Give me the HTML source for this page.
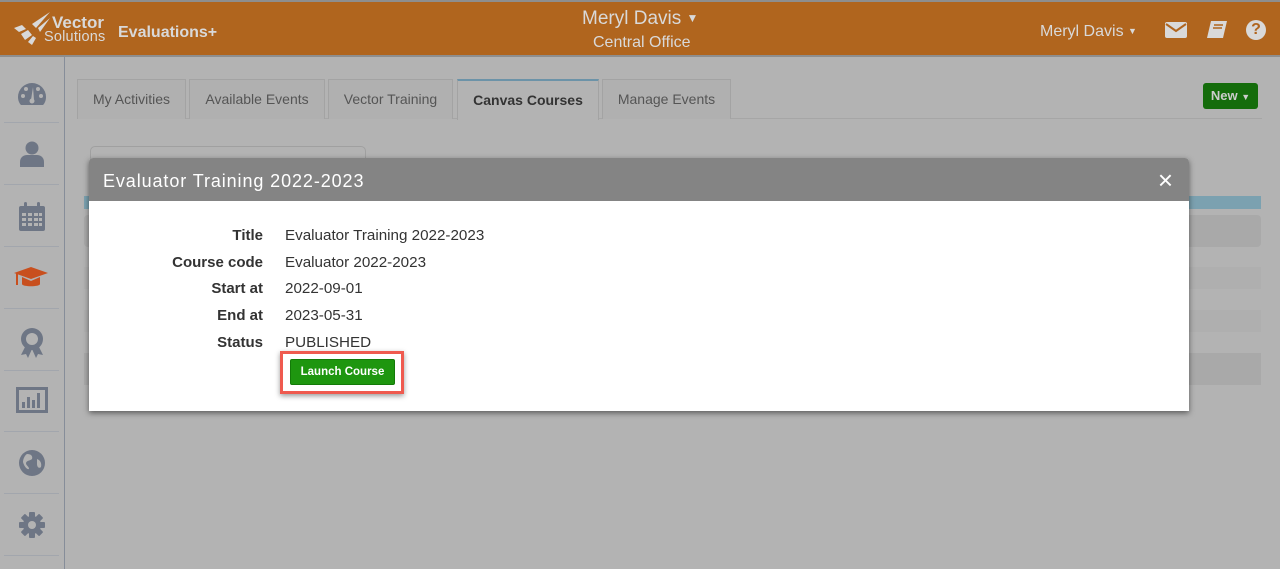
<!DOCTYPE html>
<html><head><meta charset="utf-8"><style>
*{box-sizing:border-box;margin:0;padding:0}
body{width:1280px;height:569px;overflow:hidden;background:#b3b3b3;font-family:"Liberation Sans",sans-serif;position:relative}
.hdr{position:absolute;left:0;top:0;width:1280px;height:57px;background:#b0651e;border-top:2px solid #8e8e8e;border-bottom:2px solid #8e8e8e}
.t{position:absolute;white-space:nowrap}
.side{position:absolute;left:0;top:57px;width:65px;height:512px;border-right:1px solid #868d99}
.sep{position:absolute;left:4px;width:55px;height:1px;background:#a2a6ad}
.tab{position:absolute;top:79px;height:40px;border:1px solid #a3a3a3;border-bottom:none;background:#b0b0b0;color:#555;font-size:14px;text-align:center;line-height:38px}
.modal{position:absolute;left:89px;top:158px;width:1100px;height:253px;background:#fff;box-shadow:0 2px 6px rgba(0,0,0,.5);border-radius:4px 4px 0 0}
.mh{height:43px;background:#848484;color:#fff;font-size:18px;letter-spacing:.9px;padding:13px 14px;border-radius:4px 4px 0 0}
.lb{position:absolute;left:0;width:174px;text-align:right;font-weight:bold;font-size:15px;color:#333}
.vl{position:absolute;left:196px;font-size:15.2px;color:#333}
</style></head><body>
<div class="hdr">
<svg class="t" style="left:12px;top:10px" width="40" height="36" viewBox="0 0 40 36"><g fill="#d9d9d9"><path d="M2 16l8-3 4 4-7 3z"/><path d="M9 22l7-4 4 5-7 5z"/><path d="M16 30l5-6 3 2-4 7z"/><path d="M20 12L38 0 24 16z"/><path d="M26 16L38 6 28 20z"/></g></svg>
<div class="t" style="left:52px;top:12px;color:#d9d9d9;font-size:17px;font-weight:bold;line-height:17px">Vector</div>
<div class="t" style="left:44px;top:28px;color:#d9d9d9;font-size:14.5px;line-height:14px;font-weight:300;letter-spacing:.2px">Solutions</div>
<div class="t" style="left:118px;top:22px;color:#d9d9d9;font-size:16px;font-weight:bold">Evaluations+</div>
<div class="t" style="left:582px;top:6px;color:#d9d9d9;font-size:19px">Meryl Davis <span style="font-size:12px;vertical-align:2px">▼</span></div>
<div class="t" style="left:593px;top:32px;color:#d9d9d9;font-size:16px">Central Office</div>
<div class="t" style="left:1040px;top:21px;color:#d9d9d9;font-size:16px">Meryl Davis <span style="font-size:9px;vertical-align:2px">▼</span></div>
<svg class="t" style="left:1165px;top:20px" width="22" height="16" viewBox="0 0 22 16"><rect width="22" height="16" rx="2" fill="#d9d9d9"/><path d="M1 2l10 7 10-7" stroke="#b0651e" stroke-width="2" fill="none"/></svg>
<svg class="t" style="left:1206px;top:18px" width="22" height="20" viewBox="0 0 22 20"><path d="M5 1h16l-4 17H1z" fill="#d9d9d9"/><path d="M8 5h9M7 8h9" stroke="#b0651e" stroke-width="1.5"/></svg>
<div class="t" style="left:1246px;top:18px;width:20px;height:20px;border-radius:50%;background:#d9d9d9;color:#b0651e;font-weight:bold;font-size:16px;text-align:center;line-height:20px">?</div>
</div>
<div class="side">
<svg class="t" style="left:17px;top:25px" width="30" height="24" viewBox="0 0 30 24"><path d="M15 1A14 14 0 0 0 1 15c0 3 1 6 3 8h22c2-2 3-5 3-8A14 14 0 0 0 15 1z" fill="#6e7685"/><g fill="#b3b3b3"><circle cx="6" cy="14" r="2"/><circle cx="9" cy="7" r="2"/><circle cx="21" cy="7" r="2"/><circle cx="24" cy="14" r="2"/><circle cx="15" cy="19" r="2.5"/><path d="M14 18l2-13 1 13z"/></g></svg>
<div class="sep" style="top:65px"></div>
<svg class="t" style="left:20px;top:84px" width="24" height="26" viewBox="0 0 24 26"><circle cx="12" cy="7" r="6.5" fill="#6e7685"/><path d="M0 26v-5c0-5 4-7 7-7h10c3 0 7 2 7 7v5z" fill="#6e7685"/></svg>
<div class="sep" style="top:127px"></div>
<svg class="t" style="left:18px;top:145px" width="28" height="30" viewBox="0 0 28 30"><rect x="1" y="4" width="26" height="25" rx="2" fill="#6e7685"/><g fill="#b3b3b3"><rect x="4" y="11" width="4" height="3"/><rect x="10" y="11" width="4" height="3"/><rect x="16" y="11" width="4" height="3"/><rect x="21" y="11" width="3" height="3"/><rect x="4" y="16" width="4" height="3"/><rect x="10" y="16" width="4" height="3"/><rect x="16" y="16" width="4" height="3"/><rect x="21" y="16" width="3" height="3"/><rect x="4" y="21" width="4" height="3"/><rect x="10" y="21" width="4" height="3"/><rect x="16" y="21" width="4" height="3"/><rect x="21" y="21" width="3" height="3"/></g><rect x="6" y="0" width="3" height="7" rx="1.5" fill="#6e7685"/><rect x="19" y="0" width="3" height="7" rx="1.5" fill="#6e7685"/></svg>
<div class="sep" style="top:189px"></div>
<svg class="t" style="left:14px;top:210px" width="35" height="24" viewBox="0 0 35 24"><path d="M17 0L34 6 17 12 0 6z" fill="#c84f1e"/><path d="M8 10v7c0 3 18 3 18 0v-7l-9 4z" fill="#c84f1e"/><rect x="2" y="6" width="2" height="12" fill="#c84f1e"/></svg>
<div class="sep" style="top:251px"></div>
<svg class="t" style="left:20px;top:271px" width="24" height="30" viewBox="0 0 24 30"><circle cx="12" cy="11" r="11" fill="#6e7685"/><circle cx="12" cy="11" r="6" fill="#b3b3b3"/><path d="M5 19l-4 8 5-1 2 4 4-9zM19 19l4 8-5-1-2 4-4-9z" fill="#6e7685"/></svg>
<div class="sep" style="top:313px"></div>
<svg class="t" style="left:16px;top:330px" width="32" height="26" viewBox="0 0 32 26"><rect x="1.5" y="1.5" width="29" height="23" fill="none" stroke="#6e7685" stroke-width="3"/><g fill="#6e7685"><rect x="6" y="15" width="3" height="6"/><rect x="11" y="10" width="3" height="11"/><rect x="16" y="13" width="3" height="8"/><rect x="21" y="6" width="3" height="15"/></g></svg>
<div class="sep" style="top:374px"></div>
<svg class="t" style="left:19px;top:393px" width="26" height="26" viewBox="0 0 26 26"><circle cx="13" cy="13" r="13" fill="#6e7685"/><path d="M8 4c4 0 6 2 5 5-2 2-5 1-6 4 0 3 3 3 3 6-2 1-5-3-6-7 0-3 2-7 4-8zM18 9c3 1 5 4 4 8-2 2-4 0-4-3z" fill="#b3b3b3"/></svg>
<div class="sep" style="top:436px"></div>
<svg class="t" style="left:19px;top:455px" width="26" height="26" viewBox="0 0 26 26"><g fill="#6e7685"><circle cx="13" cy="13" r="9"/><rect x="10" y="0" width="6" height="26" rx="1"/><rect x="0" y="10" width="26" height="6" rx="1"/><rect x="10" y="0" width="6" height="26" rx="1" transform="rotate(45 13 13)"/><rect x="10" y="0" width="6" height="26" rx="1" transform="rotate(-45 13 13)"/></g><circle cx="13" cy="13" r="4" fill="#b3b3b3"/></svg>
<div class="sep" style="top:498px"></div>
</div>
<div class="t" style="left:77px;top:118px;width:1185px;height:1px;background:#a6a6a6"></div>
<div class="tab" style="left:77px;width:109px">My Activities</div>
<div class="tab" style="left:189px;width:136px">Available Events</div>
<div class="tab" style="left:328px;width:125px">Vector Training</div>
<div class="tab" style="left:457px;width:142px;top:79px;height:41px;background:#b3b3b3;border-top:2px solid #6c93a8;color:#333;font-weight:bold">Canvas Courses</div>
<div class="tab" style="left:602px;width:129px">Manage Events</div>
<div class="t" style="left:1203px;top:83px;width:55px;height:26px;background:#146c0b;border-radius:3px;color:#ccc;font-weight:bold;font-size:13px;line-height:26px;text-align:center">New <span style="font-size:9px">▼</span></div>
<div class="t" style="left:90px;top:146px;width:276px;height:30px;border:1px solid #a0a0a0;border-radius:5px"></div>
<div class="t" style="left:84px;top:196px;width:1177px;height:13px;background:#7ba1b0"></div>
<div class="t" style="left:84px;top:215px;width:1177px;height:32px;background:#a9a9a9;border-radius:4px"></div>
<div class="t" style="left:84px;top:267px;width:1177px;height:22px;background:#afafaf"></div>
<div class="t" style="left:84px;top:310px;width:1177px;height:22px;background:#afafaf"></div>
<div class="t" style="left:84px;top:353px;width:1177px;height:32px;background:#a9a9a9"></div>
<div class="modal">
<div class="mh">Evaluator Training 2022-2023<span style="position:absolute;right:16px;top:9px;font-size:26px;line-height:26px;letter-spacing:0">×</span></div>
<div class="lb" style="top:69px">Title</div><div class="vl" style="top:69px">Evaluator Training 2022-2023</div>
<div class="lb" style="top:96px">Course code</div><div class="vl" style="top:96px">Evaluator 2022-2023</div>
<div class="lb" style="top:122px">Start at</div><div class="vl" style="top:122px">2022-09-01</div>
<div class="lb" style="top:149px">End at</div><div class="vl" style="top:149px">2023-05-31</div>
<div class="lb" style="top:176px">Status</div><div class="vl" style="top:176px">PUBLISHED</div>
<div style="position:absolute;left:191px;top:193px;width:124px;height:43px;border:3px solid #ef5a4f;box-shadow:0 2px 5px rgba(0,0,0,.4)"></div>
<div style="position:absolute;left:201px;top:201px;width:105px;height:26px;background:#1e960f;border:1px solid #137a08;border-radius:2px;color:#fff;font-weight:bold;font-size:11.5px;line-height:24px;text-align:center">Launch Course</div>
</div>
</body></html>
